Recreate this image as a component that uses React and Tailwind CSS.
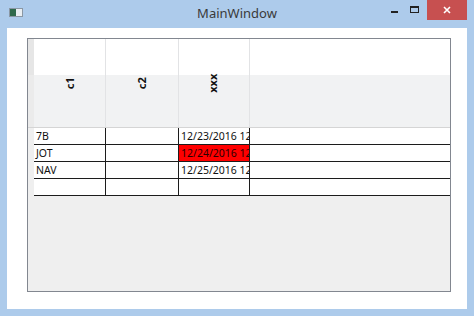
import React from "react";

const font = { fontFamily: "'Noto Sans', 'Open Sans', sans-serif" };

const rows = [
  { c1: "7B", c2: "", date: "12/23/2016 12:00:00 AM", hot: false },
  { c1: "JOT", c2: "", date: "12/24/2016 12:00:00 AM", hot: true },
  { c1: "NAV", c2: "", date: "12/25/2016 12:00:00 AM", hot: false },
  { c1: "", c2: "", date: "", hot: false },
];

function TitleBar() {
  return (
    <div className="relative flex h-[28px] items-center justify-center">
      <svg className="absolute left-[9px] top-[8px]" width="14" height="9" viewBox="0 0 14 9">
        <rect x="0.5" y="0.5" width="13" height="8" fill="#e9eef2" stroke="#8a97a4" />
        <rect x="1" y="1" width="6" height="7" fill="#2f6a4c" />
      </svg>
      <span className="mt-[-1px] text-[13px] text-[#3a3a3a]">MainWindow</span>
      <div className="absolute right-[7px] top-0 flex h-[20px] items-stretch">
        <div className="flex w-[25px] items-center justify-center">
          <div className="mt-[4px] h-[2px] w-[7px] bg-[#222]" />
        </div>
        <div className="flex w-[15px] items-center justify-center">
          <div className="mb-[1px] h-[7px] w-[9px] border border-t-2 border-[#222]" />
        </div>
        <div className="ml-[5px] flex w-[40px] items-center justify-center bg-[#c75050]">
          <svg width="8" height="8" viewBox="0 0 8 8">
            <path d="M1 1 L7 7 M7 1 L1 7" stroke="#fff" strokeWidth="1.6" />
          </svg>
        </div>
      </div>
    </div>
  );
}

function HeaderCell({ w, label }) {
  return (
    <div className={`${w} flex items-center justify-center border-r border-[#e2e3e5]`}>
      {label && <span className="-rotate-90 text-[11px] font-bold text-[#111]">{label}</span>}
    </div>
  );
}

export default function App() {
  return (
    <div className="flex h-[316px] w-[474px] flex-col overflow-hidden bg-[#adcbeb]" style={font}>
      <TitleBar />
      <div className="mx-[7px] h-[281px] w-[460px] bg-white pl-[20px] pt-[10px]">
        <div className="flex h-[254px] w-[424px] flex-col border border-[#828790] bg-[#efefef]">
          {/* column headers */}
          <div className="flex h-[89px] shrink-0 border-b border-[#d5d5d5] bg-[linear-gradient(to_bottom,#ffffff_0%,#ffffff_41%,#f1f2f3_41%,#f1f2f3_100%)]">
            <div className="w-[6px] bg-[linear-gradient(to_bottom,#e6e6e6_0%,#e6e6e6_41%,#ebebeb_41%,#ebebeb_100%)]" />
            <HeaderCell w="w-[72px]" label="c1" />
            <HeaderCell w="w-[73px]" label="c2" />
            <HeaderCell w="w-[71px]" label="xxx" />
            <div className="flex-1" />
          </div>
          {/* rows */}
          <div className="flex flex-col pl-[6px]">
            {rows.map((r, i) => (
              <div key={i} className="flex h-[17px] border-b border-[#1c1c1c] text-[10.5px] leading-[16px] text-[#111]">
                <div className="w-[72px] overflow-hidden whitespace-nowrap border-r border-[#1c1c1c] bg-white pl-[2px]">{r.c1}</div>
                <div className="w-[73px] overflow-hidden whitespace-nowrap border-r border-[#1c1c1c] bg-white pl-[2px]">{r.c2}</div>
                <div
                  className={`w-[71px] overflow-hidden whitespace-nowrap border-r border-[#1c1c1c] pl-[2px] ${
                    r.hot ? "bg-[#ff0000] text-[#2a0000]" : "bg-white"
                  }`}
                >
                  {r.date}
                </div>
                <div className="flex-1 bg-white" />
              </div>
            ))}
          </div>
        </div>
      </div>
    </div>
  );
}
